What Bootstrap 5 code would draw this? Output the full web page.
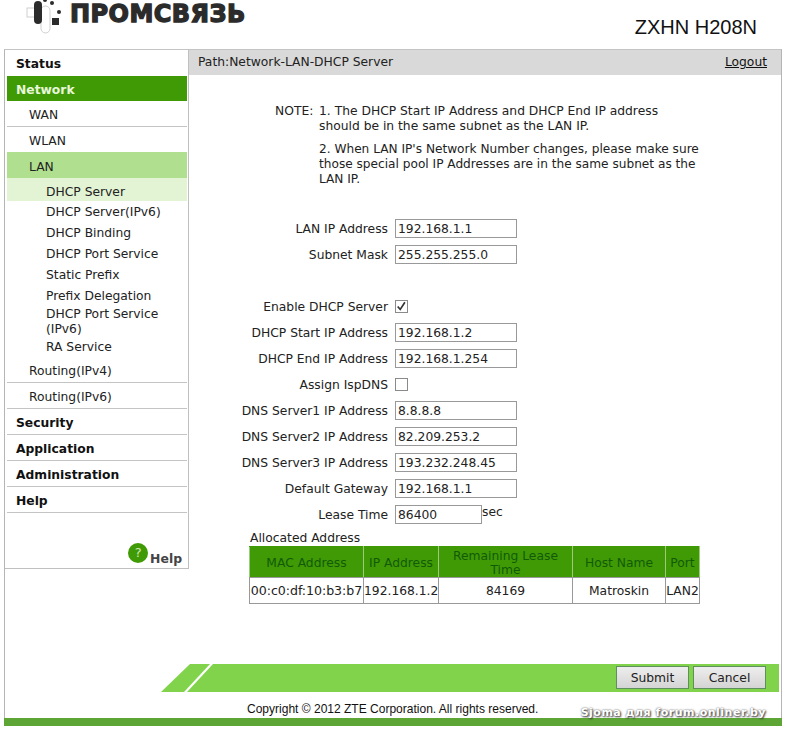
<!DOCTYPE html>
<html lang="en">
<head>
<meta charset="utf-8">
<title>ZXHN H208N</title>
<link href="https://cdn.jsdelivr.net/npm/bootstrap@5.3.0/dist/css/bootstrap.min.css" rel="stylesheet">
<style>
html,body{background:#fff;margin:0;height:736px;overflow:hidden}
body{font-family:"DejaVu Sans",sans-serif;font-size:12.3px;color:#222;line-height:15px}
.pagewrap{width:788px}
.tophead{height:49px;padding-left:24px;padding-right:31px;overflow:hidden}
.logotext{font-family:"DejaVu Sans",sans-serif;font-weight:700;font-size:24px;line-height:30px;letter-spacing:.45px;color:#2b2b2b;-webkit-text-stroke:1.3px #2b2b2b;margin-top:-1px}
.modelname{font-family:"Liberation Sans",sans-serif;font-size:20px;line-height:24px;color:#111;padding-top:15px}
.frame{margin-left:4px;width:778px;height:669px;border-left:1px solid #b5b5b5;border-right:1px solid #b5b5b5;border-top:1px solid #c4c4c4}
.upper{height:614px}
.sidebar{width:184px;height:519px;border-right:1px solid #c0c0c0;border-bottom:1px solid #c0c0c0;flex:none;padding-left:2px;padding-right:1px}
.menu-top{height:26px;padding-left:9px;line-height:28px;font-weight:700;color:#111;border-bottom:1px solid #c4c4c4}
.menu-top.plain-first{border-bottom:0;line-height:29px}
.menu-top.on{background:#3f9a05;color:#e8f7da;border-bottom:0;height:25px;line-height:29px}
.menu-mid{height:26px;padding-left:22px;line-height:29px;border-bottom:1px solid #c4c4c4}
.menu-mid.on{background:#b0e08f;border-bottom:0;line-height:30px}
.menu-mid.flat{border-bottom:0;height:25px;line-height:28px}
.menu-sub{height:21px;padding-left:39px;line-height:23px}
.menu-sub.on{background:#e2f4d4;height:23px;line-height:29px}
.menu-sub.dbl{height:30px;line-height:15px;padding-right:20px;padding-top:1px}
.help-box{height:55px;padding-right:5px;padding-bottom:2px;font-weight:700;font-size:12.4px;color:#444}
.help-dot{width:20px;height:20px;background:#3f9a05;color:#cfe9b8;font-size:13px;font-weight:400;line-height:20px;margin-bottom:3px;margin-right:2px}
.pathbar{height:25px;background:#d9d9d9;line-height:25px;padding:0 14px 0 9px}
.pathbar a{color:#111}
.notes{padding-top:29px;padding-left:86px;width:530px}
.note-tag{width:44px;flex:none}
.note-body p{margin:0 0 8px}
.note-body p.note-two{font-size:12.15px}
.formgrid{margin-top:21px}
.frow{height:26px}
.frow label{width:199px;text-align:right;margin-right:7px;flex:none}
.gapper{height:26px}
.tinput{width:122px;height:19px;border:1px solid #999;background:#fff;font:12.3px "DejaVu Sans",sans-serif;color:#222;padding:2px 2px 0;margin-bottom:2px;border-radius:0;outline:0}
.tinput.short{width:87px}
.sec{margin-top:-5px}
.cbox{width:13px;height:13px;border:1px solid #8a8a8a;background:#fff;display:block;margin:0 0 2px;padding:0}
.alloc{margin-left:61px;margin-top:2px;line-height:16px}
.alloc-table{border-collapse:collapse;margin-left:-1px;table-layout:fixed;width:450px;font-size:12.3px}
.alloc-table th,.alloc-table td{border:1px solid #999;padding:0;text-align:center;overflow:hidden;white-space:nowrap}
.alloc-table th{background:#3f9a05;color:#125a06;font-weight:400;height:31px;line-height:14px;padding-top:2px;border-color:#9ccb7c;white-space:normal;border-top-color:#3f9a05;border-bottom-color:#999}
.alloc-table td{height:26px;background:#fff}
.alloc-table td.tight{font-size:12.6px;letter-spacing:-.05px}
.band{height:28px;margin-left:156px;margin-right:2px}
.slant{width:52px;height:28px;flex:none;display:block}
.bandfill{background:#80d34b;height:28px;flex:1;padding-right:13px;padding-top:2px}
.zbtn{width:73px;height:23px;border:1px solid #5f8f5f;background:linear-gradient(#eee,#d4d4d4);font:12.3px "DejaVu Sans",sans-serif;color:#222;padding:0;border-radius:0;margin-left:4px}
.foot{height:26px;padding-left:242px;padding-right:15px;padding-top:10px;font-family:"Liberation Sans",sans-serif;font-size:12.03px;color:#111}
.watermark{font-family:"DejaVu Sans",sans-serif;font-size:11px;font-weight:700;color:#fff;text-shadow:0 0 2px #555,1px 1px 2px #333;letter-spacing:.5px;margin-top:3px;white-space:nowrap}
.botbar{margin-left:4px;width:778px;height:8px;background:#5da636}
</style>
</head>
<body>
<div class="pagewrap">
  <div class="tophead d-flex justify-content-between">
    <div class="d-flex gap-1 align-self-start">
      <svg width="42" height="36" viewBox="0 0 42 36">
        <rect x="3" y="8" width="9" height="9" fill="none" stroke="#cfcfcf"/>
        <rect x="17" y="6" width="9" height="27" rx="4.5" fill="#fff" stroke="#cfcfcf"/>
        <rect x="10" y="1" width="8" height="23" rx="4" fill="#2b2b2b"/>
        <rect x="28" y="18" width="7" height="7" fill="#2b2b2b"/>
        <circle cx="35" cy="12" r="2" fill="#2b2b2b"/>
        <circle cx="28" cy="3" r="2" fill="#2b2b2b"/>
        <circle cx="21" cy="0" r="2" fill="#2b2b2b"/>
      </svg>
      <div class="logotext">ПРОМСВЯЗЬ</div>
    </div>
    <div class="modelname">ZXHN H208N</div>
  </div>

  <div class="frame">
    <div class="upper d-flex">
      <nav class="sidebar">
        <div class="menu-top plain-first">Status</div>
        <div class="menu-top on">Network</div>
        <div class="menu-mid">WAN</div>
        <div class="menu-mid flat">WLAN</div>
        <div class="menu-mid on">LAN</div>
        <div class="menu-sub on">DHCP Server</div>
        <div class="menu-sub">DHCP Server(IPv6)</div>
        <div class="menu-sub">DHCP Binding</div>
        <div class="menu-sub">DHCP Port Service</div>
        <div class="menu-sub">Static Prefix</div>
        <div class="menu-sub">Prefix Delegation</div>
        <div class="menu-sub dbl">DHCP Port Service (IPv6)</div>
        <div class="menu-sub">RA Service</div>
        <div class="menu-mid">Routing(IPv4)</div>
        <div class="menu-mid">Routing(IPv6)</div>
        <div class="menu-top">Security</div>
        <div class="menu-top">Application</div>
        <div class="menu-top">Administration</div>
        <div class="menu-top">Help</div>
        <div class="help-box d-flex justify-content-end align-items-end">
          <span class="help-dot rounded-circle text-center">?</span><span>Help</span>
        </div>
      </nav>

      <main class="flex-grow-1">
        <div class="pathbar d-flex justify-content-between">
          <span>Path:Network-LAN-DHCP Server</span><a href="#">Logout</a>
        </div>
        <div class="notes d-flex">
          <div class="note-tag">NOTE:</div>
          <div class="note-body">
            <p>1. The DHCP Start IP Address and DHCP End IP address<br>should be in the same subnet as the LAN IP.</p>
            <p class="note-two">2. When LAN IP's Network Number changes, please make sure<br>those special pool IP Addresses are in the same subnet as the<br>LAN IP.</p>
          </div>
        </div>
        <div class="formgrid">
          <div class="frow d-flex align-items-center"><label>LAN IP Address</label><input class="tinput" value="192.168.1.1"></div>
          <div class="frow d-flex align-items-center"><label>Subnet Mask</label><input class="tinput" value="255.255.255.0"></div>
          <div class="gapper"></div>
          <div class="frow d-flex align-items-center"><label>Enable DHCP Server</label>
            <svg class="cbox" viewBox="0 0 13 13"><path d="M2 6.5 5 10 10.5 1.5" fill="none" stroke="#333" stroke-width="2"/></svg></div>
          <div class="frow d-flex align-items-center"><label>DHCP Start IP Address</label><input class="tinput" value="192.168.1.2"></div>
          <div class="frow d-flex align-items-center"><label>DHCP End IP Address</label><input class="tinput" value="192.168.1.254"></div>
          <div class="frow d-flex align-items-center"><label>Assign IspDNS</label><span class="cbox"></span></div>
          <div class="frow d-flex align-items-center"><label>DNS Server1 IP Address</label><input class="tinput" value="8.8.8.8"></div>
          <div class="frow d-flex align-items-center"><label>DNS Server2 IP Address</label><input class="tinput" value="82.209.253.2"></div>
          <div class="frow d-flex align-items-center"><label>DNS Server3 IP Address</label><input class="tinput" value="193.232.248.45"></div>
          <div class="frow d-flex align-items-center"><label>Default Gateway</label><input class="tinput" value="192.168.1.1"></div>
          <div class="frow d-flex align-items-center"><label>Lease Time</label><input class="tinput short" value="86400"><span class="sec">sec</span></div>
        </div>
        <div class="alloc">
          <div>Allocated Address</div>
          <table class="alloc-table">
            <colgroup><col style="width:114px"><col style="width:75px"><col style="width:134px"><col style="width:93px"><col style="width:34px"></colgroup>
            <tr><th>MAC Address</th><th>IP Address</th><th>Remaining Lease<br>Time</th><th>Host Name</th><th>Port</th></tr>
            <tr><td class="tight">00:c0:df:10:b3:b7</td><td>192.168.1.2</td><td>84169</td><td>Matroskin</td><td>LAN2</td></tr>
          </table>
        </div>
      </main>
    </div>

    <div class="band d-flex">
      <svg class="slant" viewBox="0 0 52 28"><path d="M0 28 23 28 49 0 29 0Z" fill="#80d34b"/><path d="M26 28 52 0 52 28Z" fill="#80d34b"/></svg>
      <div class="bandfill d-flex justify-content-end align-items-start">
        <button type="button" class="zbtn">Submit</button>
        <button type="button" class="zbtn">Cancel</button>
      </div>
    </div>

    <div class="foot d-flex justify-content-between">
      <span>Copyright © 2012 ZTE Corporation. All rights reserved.</span>
      <span class="watermark">Sjoma для forum.onliner.by</span>
    </div>
  </div>
  <div class="botbar"></div>
</div>
</body>
</html>
